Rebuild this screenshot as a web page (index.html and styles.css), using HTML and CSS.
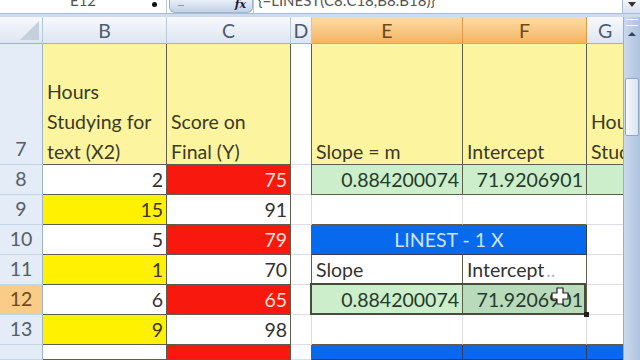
FILE: index.html
```html
<!DOCTYPE html>
<html lang="en">
<head>
  <meta charset="UTF-8" />
  <title>LINEST - Excel</title>
  <link rel="stylesheet" href="styles.css">
</head>
<body>
  <div class="app">
    <div class="fbar">
      <div class="namebox"><span class="clip">E12</span><span class="drop"></span></div>
      <div class="fxbox"><span class="tick"></span><span class="fx">fx</span></div>
      <div class="formula"><span class="clip">{=LINEST(C8:C18,B8:B18)}</span></div>
      <div class="expand"></div>
    </div>
    <div class="band"></div>

    <div class="main">
      <div class="sheet">
        <!-- column headers -->
        <div class="ch corner"></div>
        <div class="ch">B</div>
        <div class="ch">C</div>
        <div class="ch">D</div>
        <div class="ch on">E</div>
        <div class="ch on">F</div>
        <div class="ch">G</div>

        <!-- row 7 -->
        <div class="rh">7</div>
        <div class="c pale k wrap"><div class="lines">Hours<br>Studying for<br>text (X2)</div></div>
        <div class="c pale k wrap"><div class="lines">Score on<br>Final (Y)</div></div>
        <div class="c"></div>
        <div class="c pale k kl wrap"><div class="lines">Slope = m</div></div>
        <div class="c pale k wrap"><div class="lines">Intercept</div></div>
        <div class="c pale k wrap cut"><div class="lines wide">Hours<br>Studying for</div></div>

        <!-- row 8 -->
        <div class="rh">8</div>
        <div class="c k num">2</div>
        <div class="c red k num">75</div>
        <div class="c"></div>
        <div class="c mint k kl num">0.884200074</div>
        <div class="c mint k num">71.9206901</div>
        <div class="c mint k"></div>

        <!-- row 9 -->
        <div class="rh">9</div>
        <div class="c yel k num">15</div>
        <div class="c k num">91</div>
        <div class="c"></div>
        <div class="c kb"></div>
        <div class="c kb"></div>
        <div class="c"></div>

        <!-- row 10 -->
        <div class="rh">10</div>
        <div class="c k num">5</div>
        <div class="c red k num">79</div>
        <div class="c"></div>
        <div class="c blue k kl span2">LINEST - 1 X</div>
        <div class="c"></div>

        <!-- row 11 -->
        <div class="rh">11</div>
        <div class="c yel k num">1</div>
        <div class="c k num">70</div>
        <div class="c"></div>
        <div class="c k kl">Slope</div>
        <div class="c k">Intercept <span class="dots">..</span></div>
        <div class="c"></div>

        <!-- row 12 -->
        <div class="rh on">12</div>
        <div class="c k num">6</div>
        <div class="c red k num">65</div>
        <div class="c"></div>
        <div class="c mint k kl num active">0.884200074<div class="selbox"></div></div>
        <div class="c mint sel k num">71.9206901<div class="handle"></div>
          <svg class="cursor" width="18" height="18" viewBox="0 0 18 18">
            <path d="M6 1h6v5h5v6h-5v5H6v-5H1V6h5z" fill="#fff" stroke="#222" stroke-width="1.2"/>
          </svg>
        </div>
        <div class="c"></div>

        <!-- row 13 -->
        <div class="rh">13</div>
        <div class="c yel k num">9</div>
        <div class="c k num">98</div>
        <div class="c"></div>
        <div class="c kb"></div>
        <div class="c kb"></div>
        <div class="c kb"></div>

        <!-- row 14 -->
        <div class="rh"></div>
        <div class="c k"></div>
        <div class="c red k"></div>
        <div class="c"></div>
        <div class="c blue k kl"></div>
        <div class="c blue k"></div>
        <div class="c blue k"></div>
      </div>

      <div class="vscroll">
        <div class="split"></div>
        <div class="up"></div>
        <div class="thumb"></div>
      </div>
    </div>
  </div>
</body>
</html>
```

FILE: styles.css
```css
body {
  margin: 0;
  background-color: #ffffff;
  font-family: Lato, "Open Sans", sans-serif;
  color: #333;
}
.app {
  width: 640px;
  height: 360px;
  overflow: hidden;
}
.fbar {
  display: flex;
  height: 13px;
  background-color: #ffffff;
  border-bottom: 1px solid #a9bcd5;
  font-size: 15px;
  color: #555;
}
.clip {
  display: block;
  margin-top: -9px;
  line-height: 18px;
}
.namebox {
  width: 166px;
  display: flex;
  justify-content: center;
  position: relative;
  border-right: 1px solid #b8c8dc;
}
.drop {
  position: absolute;
  right: 9px;
  top: 2px;
  width: 5px;
  height: 5px;
  border-radius: 50%;
  background-color: #111;
}
.fxbox {
  width: 84px;
  margin-left: 2px;
  display: flex;
  align-items: flex-start;
  justify-content: space-between;
  padding: 0 6px 0 8px;
  box-sizing: border-box;
  background: linear-gradient(#e8eef7, #c3d2e6);
  border: 1px solid #9fb4d0;
  border-top: none;
  border-radius: 0 0 6px 6px;
}
.tick {
  width: 6px;
  height: 3px;
  margin-top: 2px;
  border-bottom: 1px solid #8a9bb3;
}
.fx {
  font-family: "DejaVu Serif", serif;
  font-style: italic;
  font-weight: bold;
  font-size: 11px;
  line-height: 9px;
  color: #223;
}
.formula {
  flex: 1;
  padding-left: 4px;
  border-left: 1px solid #b8c8dc;
  overflow: hidden;
}
.expand {
  width: 17px;
  background: linear-gradient(#f2f5fa, #d7e2f0);
  border-left: 1px solid #a9bcd5;
  position: relative;
}
.expand::after {
  content: "";
  position: absolute;
  left: 5px;
  top: 2px;
  border-left: 4px solid transparent;
  border-right: 4px solid transparent;
  border-top: 5px solid #333;
}
.band {
  height: 3px;
  background-color: #cfdcee;
}
.main {
  display: flex;
  height: 343px;
}
.sheet {
  display: grid;
  grid-template-columns: 43px 124px 124px 21px 151px 124px 37px;
  grid-template-rows: 27px 121px repeat(6, 30px) 15px;
  width: 624px;
  font-size: 19.5px;
  overflow: hidden;
}
.ch {
  display: flex;
  align-items: center;
  justify-content: center;
  background: linear-gradient(#f7f9fc, #dde6f1);
  border-right: 1px solid #b9c9dd;
  border-bottom: 1px solid #9db3cd;
  color: #4d5b6c;
  box-sizing: border-box;
}
.ch.on {
  background: linear-gradient(#fcdca9, #f5b462);
  border-right-color: #d99a48;
  color: #6e4a18;
}
.corner {
  position: relative;
}
.corner::after {
  content: "";
  position: absolute;
  right: 3px;
  bottom: 3px;
  border-left: 19px solid transparent;
  border-bottom: 19px solid #c4d0de;
}
.rh {
  display: flex;
  align-items: flex-end;
  justify-content: center;
  line-height: 30px;
  background-color: #e4ecf7;
  border-right: 1px solid #9db3cd;
  border-bottom: 1px solid #c6d4e5;
  color: #555d66;
  box-sizing: border-box;
}
.rh.on {
  background-color: #f9cc88;
  color: #6e4a18;
}
.c {
  position: relative;
  display: flex;
  align-items: flex-end;
  padding: 0 4px;
  line-height: 29px;
  white-space: nowrap;
  border-right: 1px solid #dadde2;
  border-bottom: 1px solid #dadde2;
  box-sizing: border-box;
}
.k {
  border-right-color: #5e5e4a;
  border-bottom-color: #5e5e4a;
}
.kl {
  box-shadow: -1px 0 0 #5e5e4a;
}
.kb {
  border-bottom-color: #5e5e4a;
}
.wrap {
  line-height: 30px;
  color: #3b3a24;
}
.lines {
  margin-bottom: -3px;
}
.num {
  justify-content: flex-end;
  padding-right: 3px;
}
.pale {
  background-color: #fcf49e;
}
.yel {
  background-color: #fff100;
  color: #3a3620;
}
.red {
  background-color: #f8180e;
  color: #ffe1d8;
}
.mint {
  background-color: #cdeecb;
  color: #243a2a;
}
.blue {
  background-color: #0769ee;
  border-right-color: #2f3f5a;
  border-bottom-color: #2f3f5a;
  color: #cfe2ff;
}
.span2 {
  grid-column: span 2;
  justify-content: center;
}
.cut {
  overflow: hidden;
  padding-right: 0;
}
.wide {
  width: 120px;
  flex: none;
}
.dots {
  color: #bbb;
  margin-left: 2px;
}
.sel {
  background-color: #b9dbbb;
}
.selbox {
  position: absolute;
  left: -2px;
  top: -2px;
  width: 276px;
  height: 32px;
  border: 2px solid #4b4b3c;
  box-sizing: border-box;
  z-index: 2;
}
.handle {
  position: absolute;
  right: -3px;
  bottom: -3px;
  width: 5px;
  height: 5px;
  background-color: #222;
  z-index: 3;
}
.cursor {
  position: absolute;
  left: 88px;
  top: 2px;
  z-index: 4;
}
.vscroll {
  position: relative;
  width: 16px;
  background: linear-gradient(90deg, #c9d8ec, #aec3df);
  border-left: 1px solid #98aecb;
}
.split {
  height: 5px;
  margin: 2px 2px 0;
  border-top: 1px solid #fff;
  border-bottom: 1px solid #fff;
}
.up {
  margin: 6px auto 0;
  width: 0;
  border-left: 4px solid transparent;
  border-right: 4px solid transparent;
  border-bottom: 4px solid #36455c;
}
.thumb {
  position: absolute;
  left: 1px;
  right: 1px;
  top: 61px;
  height: 56px;
  background: linear-gradient(90deg, #f5f8fc, #d9e4f2);
  border: 1px solid #8fa6c4;
  border-radius: 2px;
}
```
